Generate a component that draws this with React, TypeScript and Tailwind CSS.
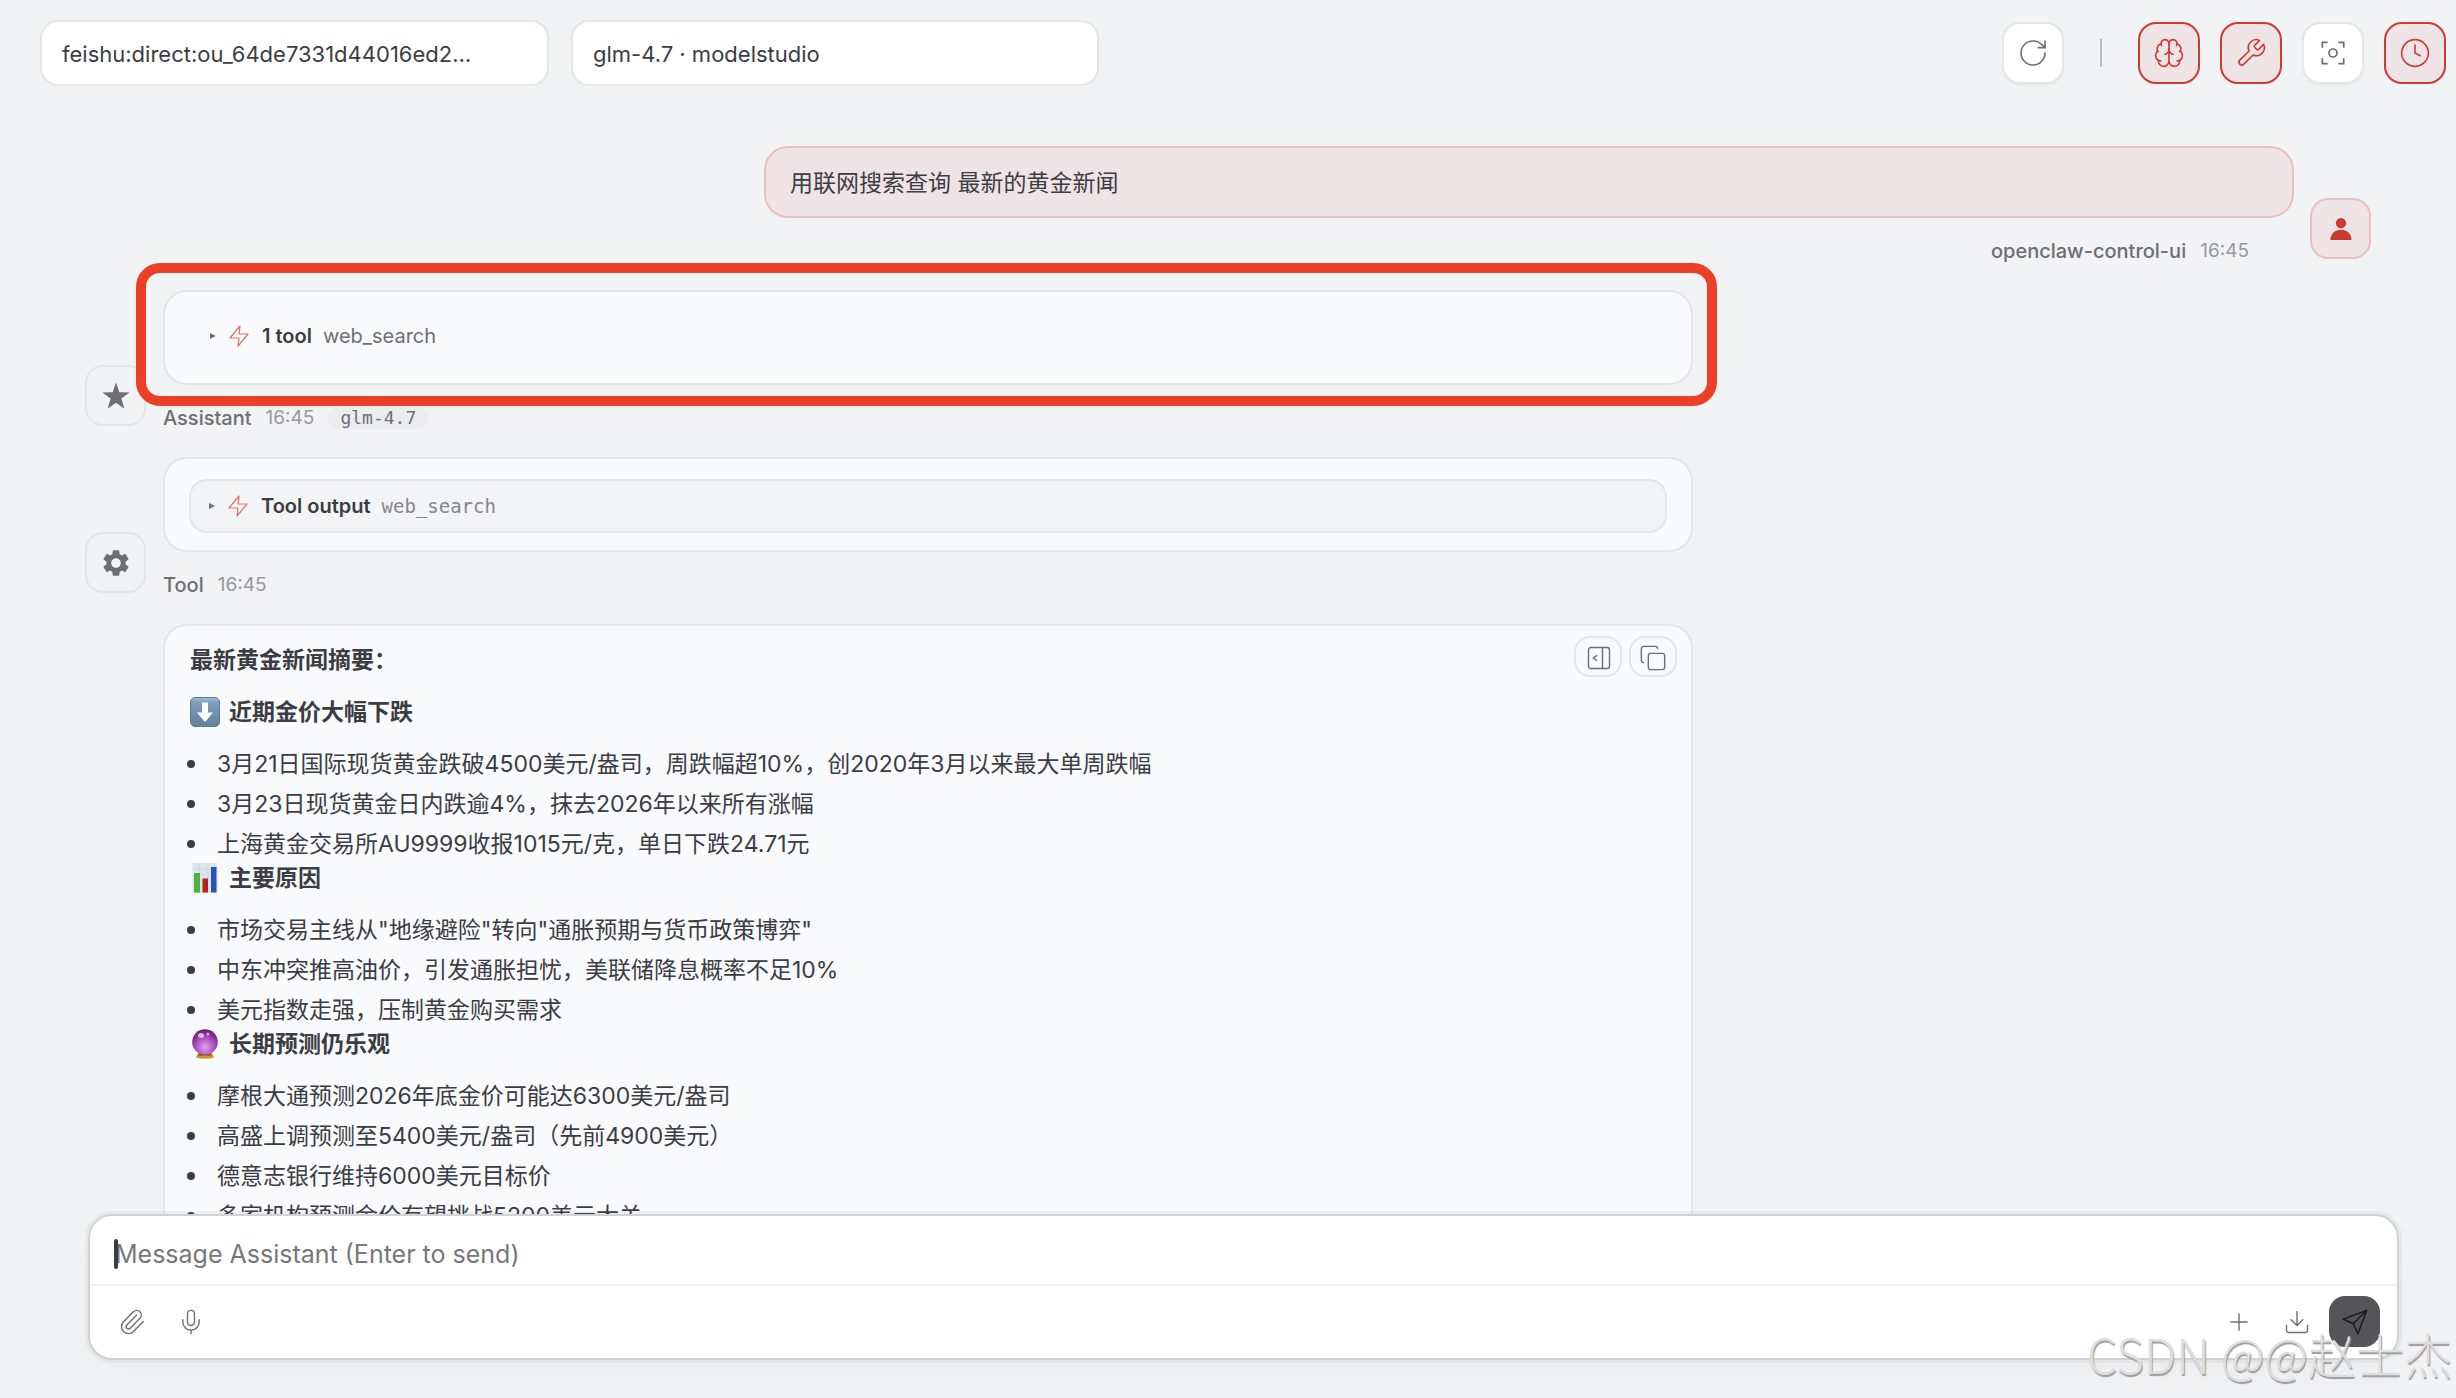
import React from "react";
import { Brain, Copy, Mic, Paperclip, Plus, RotateCw } from "lucide-react";

function IconButton({ label, active, children }: { label: string; active?: boolean; children: React.ReactNode }) {
  return (
    <button
      type="button"
      aria-label={label}
      aria-pressed={active}
      className={
        "flex size-[62px] items-center justify-center rounded-[18px] border-2 " +
        (active
          ? "border-[#cf3a31] bg-[#eee4e5] text-[#cf3a31]"
          : "border-[#e5e5ea] bg-white text-[#6e6e73] shadow-xs")
      }
    >
      {children}
    </button>
  );
}

function LineIcon({ children, className }: { children: React.ReactNode; className?: string }) {
  return (
    <svg
      viewBox="0 0 24 24"
      fill="none"
      stroke="currentColor"
      strokeWidth="1.2"
      strokeLinecap="round"
      strokeLinejoin="round"
      aria-hidden="true"
      className={className ?? "size-8"}
    >
      {children}
    </svg>
  );
}

function Bolt() {
  return (
    <LineIcon className="size-6 text-[#d9736c]">
      <path d="M13 2 3 14h9l-1 8 10-12h-9l1-8z" />
    </LineIcon>
  );
}

function Caret() {
  return (
    <svg viewBox="0 0 6 8" aria-hidden="true" className="h-2 w-1.5 text-[#6e6e73]">
      <path d="M0 1v6l6-3z" fill="currentColor" />
    </svg>
  );
}

function Avatar({ user, children }: { user?: boolean; children: React.ReactNode }) {
  return (
    <div
      className={
        "mb-1.5 flex size-[61px] shrink-0 items-center justify-center rounded-[18px] border-2 " +
        (user ? "border-[#e9c0bf] bg-[#eee4e5] text-[#cb3930]" : "border-[#e5e6e9] bg-[#f2f3f5] text-[#6e6e73]")
      }
    >
      {children}
    </div>
  );
}

function Meta({ name, model, user }: { name: string; model?: string; user?: boolean }) {
  return (
    <div className={"mt-[19px] flex h-7 items-center gap-3.5 " + (user ? "mr-[45px] justify-end" : "")}>
      <span className="text-[20px] font-medium text-[#6e6e73]">{name}</span>
      <time className="text-[19px] text-[#98989d]">16:45</time>
      {model && (
        <span className="rounded-full bg-[#ecedef] px-3 font-['DejaVu_Sans_Mono',monospace] text-[18px] leading-[22px] text-[#6e6e73]">
          {model}
        </span>
      )}
    </div>
  );
}

const bubble = "rounded-[24px] border-2 border-[#e5e6e9] bg-[#f9fafc]";

function ArrowEmoji() {
  return (
    <svg viewBox="0 0 30 30" role="img" aria-label="down arrow" className="size-[30px]">
      <defs>
        <linearGradient id="arrow-bg" x1="0" y1="0" x2="0" y2="1">
          <stop offset="0" stopColor="#a9c0d6" />
          <stop offset="0.15" stopColor="#7f9fc0" />
          <stop offset="1" stopColor="#647f9a" />
        </linearGradient>
      </defs>
      <rect x="0.5" y="0.5" width="29" height="29" rx="4.5" fill="url(#arrow-bg)" stroke="#5f7991" />
      <path d="M12 5.5h6v10h5L15 25 7 15.5h5z" fill="#fff" />
    </svg>
  );
}

function ChartEmoji() {
  return (
    <svg viewBox="0 0 30 30" role="img" aria-label="bar chart" className="size-[30px]">
      <rect x="2.5" y="0" width="25" height="30" fill="#dce6ef" />
      <path d="M2.5 6h25M2.5 12h25M2.5 18h25M2.5 24h25M9 0v30M18 0v30" stroke="#c8d5e1" strokeWidth="0.6" />
      <rect x="4" y="10" width="6" height="19.5" fill="#4fb13a" />
      <rect x="12.5" y="15.5" width="5.5" height="14" fill="#b3241f" />
      <rect x="21" y="4" width="5.5" height="25.5" fill="#2455b8" />
    </svg>
  );
}

function CrystalEmoji() {
  return (
    <svg viewBox="0 0 30 30" role="img" aria-label="crystal ball" className="size-[30px]">
      <defs>
        <radialGradient id="orb" cx="0.5" cy="0.7" r="0.65">
          <stop offset="0" stopColor="#e2a3ec" />
          <stop offset="0.55" stopColor="#b04fc4" />
          <stop offset="1" stopColor="#6a1f6e" />
        </radialGradient>
      </defs>
      <path d="M8 24h14l2 4.500q-9 2.500-18 0z" fill="#c9962f" />
      <path d="M9 25h12l.5 1.500h-13z" fill="#7a4f16" />
      <circle cx="15" cy="13" r="12.800" fill="url(#orb)" />
      <ellipse cx="11" cy="6.500" rx="3" ry="2.500" fill="#f6dcf8" opacity="0.75" />
      <circle cx="18" cy="5" r="1.500" fill="#f6dcf8" opacity="0.7" />
    </svg>
  );
}

const sections = [
  {
    icon: <ArrowEmoji />,
    title: "近期金价大幅下跌",
    items: [
      "3月21日国际现货黄金跌破4500美元/盎司，周跌幅超10%，创2020年3月以来最大单周跌幅",
      "3月23日现货黄金日内跌逾4%，抹去2026年以来所有涨幅",
      "上海黄金交易所AU9999收报1015元/克，单日下跌24.71元",
    ],
  },
  {
    icon: <ChartEmoji />,
    title: "主要原因",
    items: [
      '市场交易主线从"地缘避险"转向"通胀预期与货币政策博弈"',
      "中东冲突推高油价，引发通胀担忧，美联储降息概率不足10%",
      "美元指数走强，压制黄金购买需求",
    ],
  },
  {
    icon: <CrystalEmoji />,
    title: "长期预测仍乐观",
    items: [
      "摩根大通预测2026年底金价可能达6300美元/盎司",
      "高盛上调预测至5400美元/盎司（先前4900美元）",
      "德意志银行维持6000美元目标价",
      "多家机构预测金价有望挑战5200美元大关",
    ],
  },
];

export default function App() {
  return (
    <div
      lang="zh-CN"
      className="relative flex h-screen flex-col overflow-hidden bg-[#f1f3f5] font-['Inter','Noto_Sans_CJK_SC',sans-serif] text-[#3c3c43]"
    >
      <header className="flex shrink-0 items-start justify-between pt-5 pr-2.5 pl-10">
        <div className="flex gap-[22px]">
          <select
            aria-label="Session"
            className="h-[66px] w-[509px] appearance-none rounded-[18px] border-2 border-[#e5e5ea] bg-white px-5 pt-0.5 text-[22px]"
          >
            <option>feishu:direct:ou_64de7331d44016ed2…</option>
          </select>
          <select
            aria-label="Model"
            className="h-[66px] w-[528px] appearance-none rounded-[18px] border-2 border-[#e5e5ea] bg-white px-5 pt-0.5 text-[22px]"
          >
            <option>glm-4.7 · modelstudio</option>
          </select>
        </div>
        <div className="flex items-center gap-5 pt-0.5">
          <IconButton label="Refresh">
            <RotateCw className="size-8" strokeWidth={1.2} aria-hidden="true" />
          </IconButton>
          <div className="mx-4 h-7 w-0.5 bg-[#b9b9c3]" />
          <IconButton label="Thinking" active>
            <Brain className="size-8" strokeWidth={1.2} aria-hidden="true" />
          </IconButton>
          <IconButton label="Tools" active>
            <LineIcon>
              <path d="M14.7 6.3a1 1 0 0 0 0 1.4l1.6 1.6a1 1 0 0 0 1.4 0l3.77-3.77a6 6 0 0 1-7.94 7.94l-6.91 6.91a2.12 2.12 0 0 1-3-3l6.91-6.91a6 6 0 0 1 7.94-7.94l-3.76 3.76z" />
            </LineIcon>
          </IconButton>
          <IconButton label="Focus mode">
            <svg viewBox="0 0 24 24" fill="none" stroke="currentColor" strokeWidth="1.3" aria-hidden="true" className="size-8">
              <path d="M4 8V4h4M16 4h4v4M20 16v4h-4M8 20H4v-4" />
              <circle cx="12" cy="12" r="3" />
            </svg>
          </IconButton>
          <IconButton label="Scheduled runs" active>
            <LineIcon>
              <circle cx="12" cy="12" r="10" />
              <path d="M12 6v6l4 2" />
            </LineIcon>
          </IconButton>
        </div>
      </header>

      <main className="flex min-h-0 flex-1 flex-col gap-[25px] overflow-hidden px-[85px] pt-[60px]">
        <article className="flex shrink-0 items-end justify-end gap-4">
          <div className="w-full max-w-[1530px]">
            <div className="rounded-[24px] border-2 border-[#e9c0bf] bg-[#eee4e5] px-6 pt-[18px] pb-4 text-[23px] leading-[34px]">
              用联网搜索查询 最新的黄金新闻
            </div>
            <Meta name="openclaw-control-ui" user />
          </div>
          <Avatar user>
            <svg viewBox="0 0 24 24" fill="currentColor" aria-hidden="true" className="size-7">
              <circle cx="12" cy="7" r="4.400" />
              <path d="M3 21.500c0-5.500 4-8.800 9-8.800s9 3.300 9 8.800z" />
            </svg>
          </Avatar>
        </article>

        <article className="flex shrink-0 items-end gap-[17px]">
          <Avatar>
            <svg viewBox="0 0 24 24" fill="currentColor" aria-hidden="true" className="size-7">
              <path d="M12 0.500l2.900 8.300 8.600.2-6.900 5.200 2.500 8.500L12 17.700l-7.100 5 2.500-8.500L.5 9l8.600-.2z" />
            </svg>
          </Avatar>
          <div className="w-full max-w-[1530px]">
            <div className="relative">
              <div className={bubble + " flex h-[95px] items-center px-[45px] pb-[3px]"}>
                <button type="button" aria-expanded="false" className="flex items-center gap-[11px] text-[20px]">
                  <Caret />
                  <Bolt />
                  <span className="font-semibold">1 tool</span>
                  <span className="text-[#6e6e73]">web_search</span>
                </button>
              </div>
              <div className="pointer-events-none absolute -top-[27px] -right-6 -bottom-[21px] -left-[27px] rounded-[24px] border-10 border-[#eb4026]" />
            </div>
            <Meta name="Assistant" model="glm-4.7" />
          </div>
        </article>

        <article className="flex shrink-0 items-end gap-[17px]">
          <Avatar>
            <svg viewBox="0 0 24 24" fill="currentColor" aria-hidden="true" className="size-8">
              <path d="M19.140 12.940c.040-.3.060-.610.060-.940 0-.320-.020-.640-.070-.940l2.030-1.580c.180-.140.230-.410.120-.610l-1.920-3.320c-.120-.220-.370-.290-.590-.220l-2.390.960c-.5-.380-1.030-.7-1.620-.940l-.360-2.540c-.040-.240-.240-.410-.480-.410h-3.840c-.240 0-.430.170-.470.410l-.360 2.540c-.590.240-1.130.570-1.620.940l-2.390-.960c-.220-.080-.470 0-.590.220L2.740 8.870c-.120.210-.080.470.120.610l2.030 1.580c-.050.3-.090.630-.090.940s.020.640.070.940l-2.030 1.580c-.180.140-.230.410-.120.610l1.920 3.320c.120.220.370.290.590.220l2.390-.960c.5.380 1.030.7 1.620.940l.360 2.540c.050.240.240.410.480.410h3.840c.240 0 .440-.170.470-.410l.360-2.540c.590-.240 1.130-.560 1.620-.940l2.390.960c.220.080.470 0 .590-.220l1.920-3.320c.120-.220.070-.470-.120-.610l-2.010-1.580zM12 15.600c-1.980 0-3.600-1.620-3.600-3.600s1.620-3.600 3.600-3.600 3.600 1.620 3.600 3.600-1.620 3.600-3.600 3.600z" />
            </svg>
          </Avatar>
          <div className="w-full max-w-[1530px]">
            <div className={bubble + " flex h-[95px] items-center px-6 pt-[3px]"}>
              <button
                type="button"
                aria-expanded="false"
                className="flex h-[54px] w-full items-center gap-[11px] rounded-[18px] border-2 border-[#e5e6e9] bg-[#f3f4f6] px-[18px] text-[20px]"
              >
                <Caret />
                <Bolt />
                <span className="font-semibold">Tool output</span>
                <span className="font-['DejaVu_Sans_Mono',monospace] text-[19px] text-[#86868b]">web_search</span>
              </button>
            </div>
            <Meta name="Tool" />
          </div>
        </article>

        <article className="flex shrink-0 items-end gap-[17px]">
          <div className="w-[61px] shrink-0" />
          <div className={bubble + " relative w-full max-w-[1530px] px-[25px] py-[17px] text-[23px] leading-[34px]"}>
            <div className="absolute top-2.5 right-3.5 flex gap-[7px] text-[#6e6e73]">
              <button
                type="button"
                aria-label="Open in side panel"
                className="flex h-[41px] w-12 items-center justify-center rounded-[16px] border-2 border-[#e5e6e9] pt-0.5 pl-0.5"
              >
                <LineIcon className="size-7">
                  <rect x="3" y="3" width="18" height="18" rx="2" />
                  <path d="M15 3v18M10 10l-3 2 3 2" />
                </LineIcon>
              </button>
              <button
                type="button"
                aria-label="Copy"
                className="flex h-[41px] w-12 items-center justify-center rounded-[16px] border-2 border-[#e5e6e9] pt-0.5"
              >
                <Copy className="size-7" strokeWidth={1.2} aria-hidden="true" />
              </button>
            </div>
            <p className="mb-[18px] font-semibold">最新黄金新闻摘要：</p>
            {sections.map((section) => (
              <section key={section.title}>
                <h3 className="mb-[18px] flex items-center gap-[9px] font-semibold">
                  {section.icon}
                  {section.title}
                </h3>
                <ul className="flex flex-col gap-1.5">
                  {section.items.map((item) => (
                    <li
                      key={item}
                      className="flex items-center gap-[22px] before:-ml-[3px] before:size-2 before:shrink-0 before:rounded-full before:bg-[#3c3c43]"
                    >
                      {item}
                    </li>
                  ))}
                </ul>
              </section>
            ))}
          </div>
        </article>
      </main>

      <form
        onSubmit={(e) => e.preventDefault()}
        className="relative mr-[57px] mb-[38px] ml-[88px] shrink-0 rounded-[24px] border-2 border-[#d1d1d6] bg-white shadow-[0_0_0_3px_rgba(60,60,67,0.05),0_24px_48px_rgba(60,60,67,0.03)]"
      >
        <div className="relative flex border-b-2 border-[#f2f2f4] px-[25px] pt-[22px] pb-[14px]">
          <textarea
            aria-label="Message"
            rows={1}
            placeholder="Message Assistant (Enter to send)"
            className="h-8 w-full resize-none bg-transparent text-[25px] leading-8 outline-none placeholder:text-[#77777c]"
          />
          <span className="absolute top-[23px] left-6 h-[30px] w-1 rounded-full bg-[#3c3c43]" />
        </div>
        <div className="flex items-center justify-between pt-2.5 pr-[17px] pb-[11px] pl-7 text-[#6e6e73]">
          <div className="flex items-center gap-[31px]">
            <button type="button" aria-label="Attach file">
              <Paperclip className="size-7" strokeWidth={1.2} aria-hidden="true" />
            </button>
            <button type="button" aria-label="Voice input">
              <Mic className="size-7" strokeWidth={1.2} aria-hidden="true" />
            </button>
          </div>
          <div className="flex items-center">
            <button type="button" aria-label="New session" className="mr-[30px]">
              <Plus className="size-7" strokeWidth={1.2} aria-hidden="true" />
            </button>
            <button type="button" aria-label="Export" className="mr-[18px]">
              <LineIcon className="size-7">
                <path d="M12 3v12M7 10l5 5 5-5M21 15v4a2 2 0 0 1-2 2H5a2 2 0 0 1-2-2v-4" />
              </LineIcon>
            </button>
            <button
              type="submit"
              aria-label="Send"
              className="flex size-[51px] items-center justify-center rounded-[16px] bg-[#545459] text-[#18181b]"
            >
              <LineIcon className="size-7">
                <path d="M22 2 2 9.500l8.500 4L14.500 22zM22 2 10.500 13.500" />
              </LineIcon>
            </button>
          </div>
        </div>
      </form>

      <div className="pointer-events-none absolute right-1 bottom-3 font-['Noto_Sans_CJK_SC',sans-serif] text-[48px] leading-[66px] font-light text-[#dededf] [text-shadow:1px_2px_1px_#9b9b9b]">
        CSDN @@赵士杰
      </div>
    </div>
  );
}
